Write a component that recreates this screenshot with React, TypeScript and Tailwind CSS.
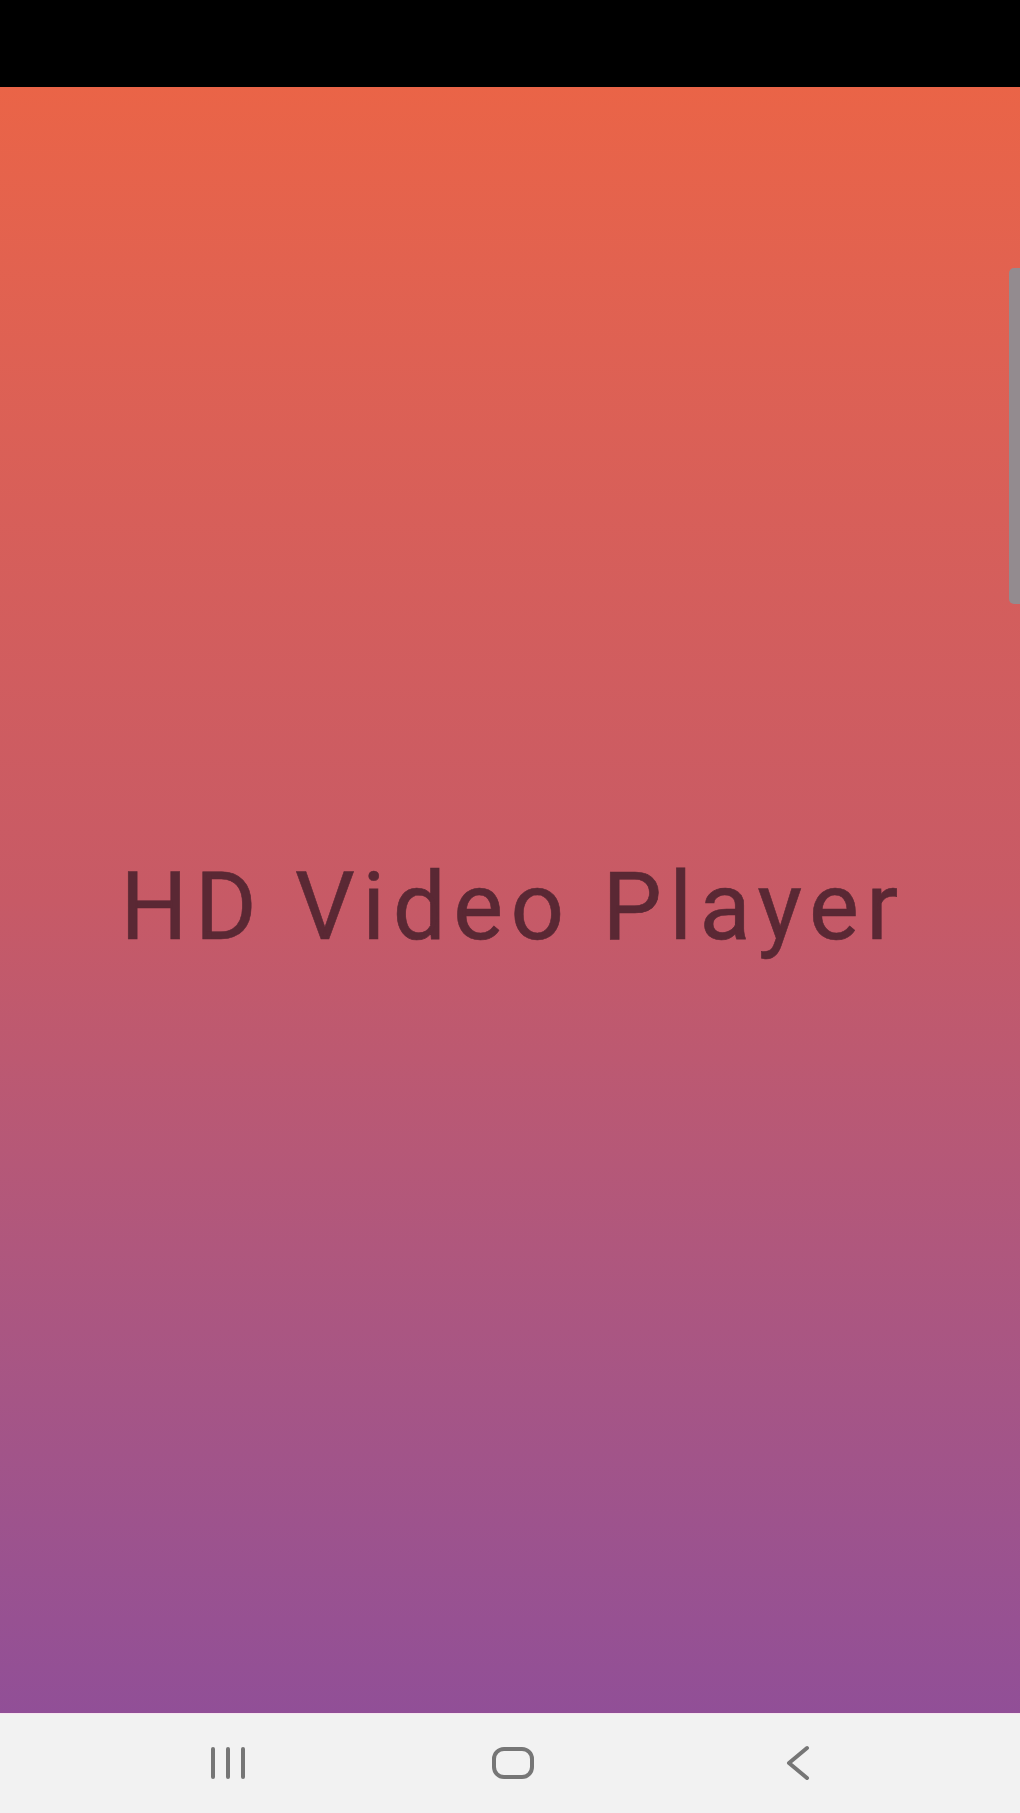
export default function App() {
  return (
    <div className="relative flex h-[1813px] w-[1020px] flex-col overflow-hidden">
      {/* status bar */}
      <div className="h-[87px] bg-black" />

      {/* splash */}
      <main className="flex flex-1 items-center justify-center bg-gradient-to-b from-[#ea6447] via-[#c75a66] to-[#914f97]">
        <h1 className="pt-[14px] pl-[6px] font-['Roboto',sans-serif] text-[94px] leading-none tracking-[7.5px] text-[#5a2834] [-webkit-text-stroke:0.6px_#5a2834]">
          HD Video Player
        </h1>
      </main>

      {/* nav bar */}
      <nav className="flex h-[100px] items-center justify-center border-t border-[#f7e6f1] bg-[#f2f2f2] pb-[2px] pl-[6px]">
        <div className="flex w-[285px] justify-center">
          <svg width="38" height="34" viewBox="0 0 38 34" className="text-[#767676]">
            <g stroke="currentColor" strokeWidth="4" strokeLinecap="round">
              <line x1="4" y1="3" x2="4" y2="31" />
              <line x1="19" y1="3" x2="19" y2="31" />
              <line x1="34" y1="3" x2="34" y2="31" />
            </g>
          </svg>
        </div>
        <div className="flex w-[285px] justify-center">
          <svg width="42" height="32" viewBox="0 0 42 32" className="text-[#767676]">
            <rect x="2" y="2" width="38" height="28" rx="10" fill="none" stroke="currentColor" strokeWidth="4" />
          </svg>
        </div>
        <div className="flex w-[285px] justify-center">
          <svg width="26" height="36" viewBox="0 0 26 36" className="text-[#767676]">
            <polyline points="22,3 4,18 22,33" fill="none" stroke="currentColor" strokeWidth="4" strokeLinecap="round" strokeLinejoin="round" />
          </svg>
        </div>
      </nav>

      {/* scroll indicator */}
      <div className="absolute right-0 top-[268px] h-[336px] w-[11px] rounded-l-[5px] bg-[#938b8f]" />
    </div>
  );
}
